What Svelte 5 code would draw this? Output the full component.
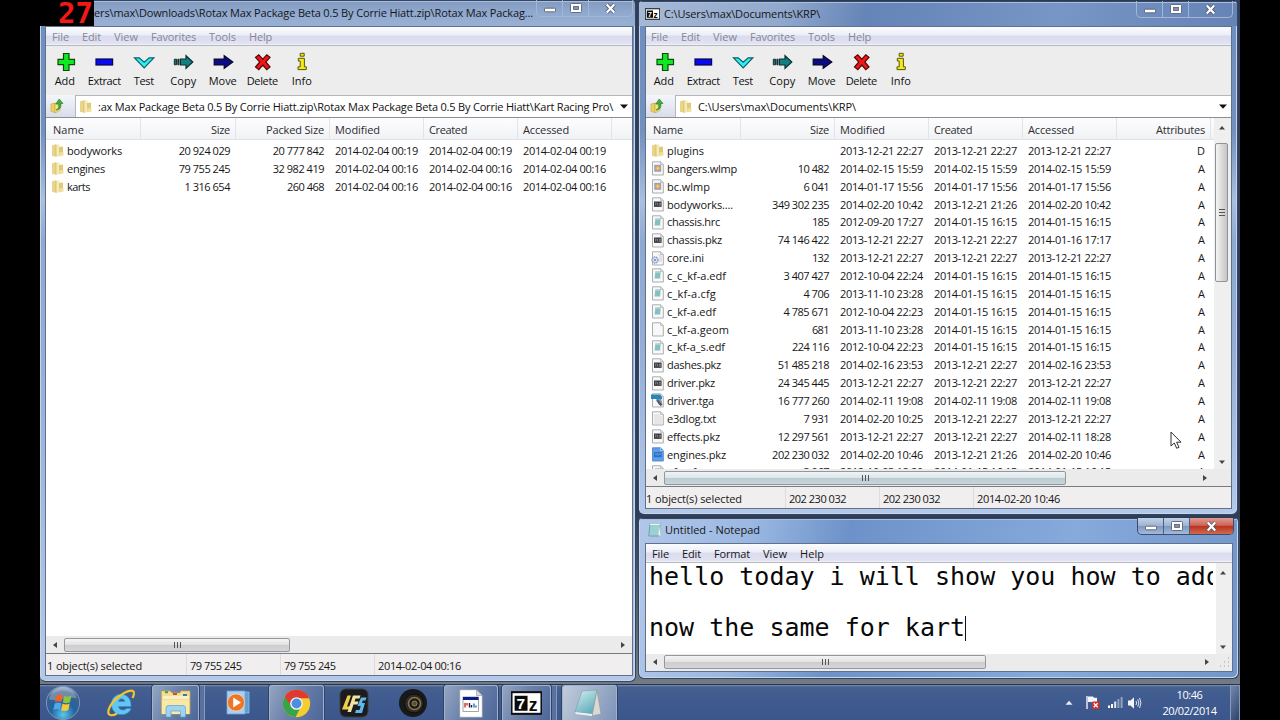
<script>
  // Spreads or tightens the letters so that a label takes exactly `w` pixels.
  function fit(node, w) {
    const apply = (width) => {
      if (!width) return;
      node.style.letterSpacing = '0px';
      const natural = node.getBoundingClientRect().width;
      const spacing = (width - natural) / node.textContent.length;
      node.style.letterSpacing = spacing.toFixed(3) + 'px';
    };
    apply(w);
    return { update: apply };
  }

  const menu = [['File', 17, 13], ['Edit', 19, 13], ['View', 24, 13], ['Favorites', 45, 13], ['Tools', 27, 13], ['Help', 23, 0]];
  const noteMenu = [['File', 17, 13], ['Edit', 19, 13], ['Format', 36, 13], ['View', 24, 13], ['Help', 24, 0]];
  const tools = [['Add', 20], ['Extract', 33], ['Test', 20], ['Copy', 26], ['Move', 28], ['Delete', 31], ['Info', 20]];

  const leftCols = [['Name', 31], ['Size', 19], ['Packed Size', 58], ['Modified', 45], ['Created', 38], ['Accessed', 46]];
  const rightCols = [['Name', 30], ['Size', 19], ['Modified', 45], ['Created', 38], ['Accessed', 46], ['Attributes', 49]];

  const leftRows = [
    ['folder', 'bodyworks', 55, '20 924 029', '20 777 842', '2014-02-04 00:19', '2014-02-04 00:19', '2014-02-04 00:19'],
    ['folder', 'engines', 38, '79 755 245', '32 982 419', '2014-02-04 00:16', '2014-02-04 00:16', '2014-02-04 00:16'],
    ['folder', 'karts', 23, '1 316 654', '260 468', '2014-02-04 00:16', '2014-02-04 00:16', '2014-02-04 00:16']
  ];
  const rightRows = [
    ['folder', 'plugins', 37, '', '2013-12-21 22:27', '2013-12-21 22:27', '2013-12-21 22:27', 'D'],
    ['wlmp', 'bangers.wlmp', 70, '10 482', '2014-02-15 15:59', '2014-02-15 15:59', '2014-02-15 15:59', 'A'],
    ['wlmp', 'bc.wlmp', 43, '6 041', '2014-01-17 15:56', '2014-01-17 15:56', '2014-01-17 15:56', 'A'],
    ['pkz', 'bodyworks....', 66, '349 302 235', '2014-02-20 10:42', '2013-12-21 21:26', '2014-02-20 10:42', 'A'],
    ['note', 'chassis.hrc', 53, '185', '2012-09-20 17:27', '2014-01-15 16:15', '2014-01-15 16:15', 'A'],
    ['pkz', 'chassis.pkz', 55, '74 146 422', '2013-12-21 22:27', '2013-12-21 22:27', '2014-01-16 17:17', 'A'],
    ['ini', 'core.ini', 37, '132', '2013-12-21 22:27', '2013-12-21 22:27', '2013-12-21 22:27', 'A'],
    ['note', 'c_c_kf-a.edf', 59, '3 407 427', '2012-10-04 22:24', '2014-01-15 16:15', '2014-01-15 16:15', 'A'],
    ['note', 'c_kf-a.cfg', 49, '4 706', '2013-11-10 23:28', '2014-01-15 16:15', '2014-01-15 16:15', 'A'],
    ['note', 'c_kf-a.edf', 49, '4 785 671', '2012-10-04 22:23', '2014-01-15 16:15', '2014-01-15 16:15', 'A'],
    ['blank', 'c_kf-a.geom', 62, '681', '2013-11-10 23:28', '2014-01-15 16:15', '2014-01-15 16:15', 'A'],
    ['note', 'c_kf-a_s.edf', 58, '224 116', '2012-10-04 22:23', '2014-01-15 16:15', '2014-01-15 16:15', 'A'],
    ['pkz', 'dashes.pkz', 54, '51 485 218', '2014-02-16 23:53', '2013-12-21 22:27', '2014-02-16 23:53', 'A'],
    ['pkz', 'driver.pkz', 48, '24 345 445', '2013-12-21 22:27', '2013-12-21 22:27', '2013-12-21 22:27', 'A'],
    ['tga', 'driver.tga', 47, '16 777 260', '2014-02-11 19:08', '2014-02-11 19:08', '2014-02-11 19:08', 'A'],
    ['txt', 'e3dlog.txt', 49, '7 931', '2014-02-20 10:25', '2013-12-21 22:27', '2013-12-21 22:27', 'A'],
    ['pkz', 'effects.pkz', 53, '12 297 561', '2013-12-21 22:27', '2013-12-21 22:27', '2014-02-11 18:28', 'A'],
    ['sel', 'engines.pkz', 59, '202 230 032', '2014-02-20 10:46', '2013-12-21 21:26', '2014-02-20 10:46', 'A'],
    ['note', 'gfx.cfg', 36, '3 067', '2012-10-03 18:20', '2014-01-15 16:15', '2014-01-15 16:15', 'A']
  ];

  // Width of a number or date in the list, from the number of its digits and gaps.
  const numWidth = (s) => {
    if (!s) return 0;
    if (s.includes('-')) return 83;
    const gaps = s.split(' ').length - 1;
    return (s.length - gaps) * 5.7 + gaps * 2.8;
  };
</script>

{#snippet fileIcon(kind)}
  <svg class="ficon" width="14" height="15" viewBox="0 0 14 15">
    {#if kind === 'folder'}
      <path d="M1 2.2 5 1.2V13.5L1 13z" fill="#e9d487" />
      <path d="M5 1.4 8.5 1.8V13L5 14z" fill="#f6eab4" />
      <path d="M8 4 12 3.4V11.5L8 13z" fill="#e0ca76" />
      <path d="M5 1.4V14" stroke="#d0b967" stroke-width=".7" />
      <path d="M8.3 9.5 12.5 9V12.5L8.3 13.6z" fill="#efe0a0" />
    {:else}
      <path d="M1.5 .8H9.5L12.3 3.5V14H1.5z" fill={kind === 'sel' ? '#5d9fe8' : '#f8f8f8'} stroke={kind === 'sel' ? '#4c88cc' : '#a2a4a8'} stroke-width=".9" />
      <path d="M9.5 .8V3.5H12.3" fill="none" stroke={kind === 'sel' ? '#a8cdf5' : '#b6b8bb'} stroke-width=".8" />
      {#if kind === 'wlmp'}
        <rect x="3.2" y="3.8" width="7" height="7" fill="#98a4b8" />
        <circle cx="6.7" cy="7.3" r="2.4" fill="#e8a758" />
        <circle cx="6.7" cy="7.3" r="1" fill="#fbdc9c" />
      {:else if kind === 'note'}
        <path d="M4.4 3.4H9.6L9.2 10.4H3.6z" fill="#86bfc0" />
        <path d="M4.4 3.4H9.6V5H4.2z" fill="#a9d3d6" />
      {:else if kind === 'pkz'}
        <rect x="3" y="4.5" width="7.6" height="5.4" fill="#3c3c40" />
        <path d="M4 6.2H5.5M4 7.8H5M6.4 6V8.4M8 6.4H9.6L8.4 8.4H9.7" stroke="#aaaab0" stroke-width=".7" fill="none" />
      {:else if kind === 'sel'}
        <rect x="3" y="5" width="7.6" height="5.2" fill="#2f6fc0" />
        <path d="M4 7H6M7 6.2V8.6M8.2 7H9.8" stroke="#8fbef2" stroke-width=".8" />
      {:else if kind === 'ini'}
        <path d="M7 4H11M8 6H11M8 8H11M8 10H11" stroke="#c6cbe0" />
        <circle cx="4" cy="9" r="3" fill="#d8def2" stroke="#8794bd" stroke-width="1.4" stroke-dasharray="1.4 .7" />
        <circle cx="4" cy="9" r="1" fill="#7485b5" />
      {:else if kind === 'txt'}
        <path d="M3 4H9M3 6H11M3 8H11M3 10H11M3 12H11" stroke="#ccc" stroke-width=".8" />
      {:else if kind === 'tga'}
        <path d="M4.5 5H10L11.5 12H8z" fill="#8796a3" />
        <path d="M0 1.5H9L11 4V6H0z" fill="#2786b8" />
        <path d="M6 7 10.5 12.5" stroke="#4e5c68" stroke-width="2" />
      {/if}
    {/if}
  </svg>
{/snippet}

{#snippet toolIcon(name)}
  <svg width="22" height="20" viewBox="0 0 22 20" stroke="#111" stroke-width="1.2" stroke-linejoin="miter">
    {#if name === 'Add'}
      <path d="M9.5 1.5H15V7.3H20.5V12.7H15V18.5H9.5V12.7H4V7.3H9.5z" fill="#10e822" stroke="#064d0b" />
    {:else if name === 'Extract'}
      <rect x="3" y="7" width="16.6" height="6" fill="#0a0af0" stroke="#06064c" />
    {:else if name === 'Test'}
      <path d="M1.5 5.8H6.2L11.2 10.2 16.2 5.8H20.8L11.2 16z" fill="#2cf0f4" stroke="#135d66" />
    {:else if name === 'Copy'}
      <path d="M2.3 7.2H4.5V12.8H2.3zM5.8 7.2H7V12.8H5.8z" fill="#0a7272" stroke-width=".8" />
      <path d="M8.4 7H14V3.7L20.8 10 14 16.3V13H8.4z" fill="#128080" stroke="#0b3034" />
    {:else if name === 'Move'}
      <path d="M2.2 7H12.2V3.7L20.8 10 12.2 16.3V13H2.2z" fill="#0c0c82" stroke="#06062c" />
    {:else if name === 'Delete'}
      <path d="M7.8 2.8 11.8 7.2 15.8 2.8 19 5.4 14.8 10 19 15 15.8 17.6 11.8 13 7.8 17.6 4.5 15 8.8 10 4.5 5.4z" fill="#ee1616" stroke="#560808" />
    {:else}
      <path d="M9.2 1.3H13.2V4.2H9.2zM7.3 6.3H13.4V14.8H15.3V17.6H7V14.8H9.2V9H7.3z" fill="#f2ea18" stroke="#5a5608" stroke-width="1" />
    {/if}
  </svg>
{/snippet}

{#snippet caption(active)}
  <div class="caption" class:active>
    <span class="cbtn"><svg width="14" height="9"><rect x="1.5" y="4.2" width="11" height="3.6" rx=".8" fill="#fff" stroke="#5a6376" stroke-width=".9" /></svg></span>
    <span class="cbtn"><svg width="14" height="12"><rect x="1.5" y="1.5" width="11" height="9" rx="1" fill="#fff" stroke="#5a6376" stroke-width=".9" /><rect x="4.6" y="4.4" width="4.8" height="3" fill="#8496b4" stroke="#5a6376" stroke-width=".9" /></svg></span>
    <span class="cbtn close"><svg width="13" height="11"><path d="M2.8 1.5 10.2 9.5M10.2 1.5 2.8 9.5" stroke="#4f5566" stroke-width="4" /><path d="M2.8 1.5 10.2 9.5M10.2 1.5 2.8 9.5" stroke="#fff" stroke-width="2.3" /></svg></span>
  </div>
{/snippet}

{#snippet menubar(items, dim)}
  <div class="menubar" class:dim>
    {#each items as [label, w, gap]}
      <span class="mi" style:width="{w + gap}px"><span class="t" use:fit={w}>{label}</span></span>
    {/each}
  </div>
{/snippet}

{#snippet toolbar()}
  <div class="toolbar">
    {#each tools as [name, w]}
      <div class="tool">{@render toolIcon(name)}<span class="t" use:fit={w}>{name}</span></div>
    {/each}
  </div>
{/snippet}

{#snippet address(path, w, cls)}
  <div class="address">
    <div class="up">
      <svg width="14" height="16" viewBox="0 0 14 16">
        <path d="M1 6 5 5V14.5L1 13.5z" fill="#ecd35f" stroke="#c2a640" stroke-width=".6" />
        <path d="M5 5.5 10 6.5V12.5L5 15z" fill="#f3e48b" stroke="#c2a640" stroke-width=".6" />
        <path d="M6 12C9 11 9 8 8.5 6H5.7L9.2 1 13 5.5H10.8C11.4 9 10 12 6 12z" fill="#3fae3a" stroke="#237222" stroke-width=".6" />
      </svg>
    </div>
    <div class="path {cls}">
      {@render fileIcon('folder')}
      <span class="t" use:fit={w}>{path}</span>
      <svg class="drop" width="8" height="5"><path d="M0 .5H8L4 4.8z" fill="#111" /></svg>
    </div>
  </div>
{/snippet}

{#snippet arrow(dir)}
  <svg class="arrow" width="8" height="8" viewBox="0 0 8 8">
    <path d={{ left: 'M6 1V7L2 4z', right: 'M2 1V7L6 4z', up: 'M1 5.5H7L4 2z', down: 'M1 2.5H7L4 6z' }[dir]} fill="#444" />
  </svg>
{/snippet}

{#snippet hscroll(w, cls)}
  <div class="hscroll {cls}">
    <span class="ha">{@render arrow('left')}</span>
    <div class="thumb" style:width="{w}px"><i></i><i></i><i></i></div>
    <span class="ha end">{@render arrow('right')}</span>
  </div>
{/snippet}

{#snippet status(cells)}
  <div class="status">
    {#each cells as [text, w]}
      <div class="cell"><span class="t" use:fit={w}>{text}</span></div>
    {/each}
  </div>
{/snippet}

{#snippet logo7z(w, h)}
  <svg width={w} height={h} viewBox="0 0 30 22">
    <rect x=".5" y=".5" width="29" height="21" fill="#fff" stroke="#111" stroke-width="2" />
    <rect x="3.5" y="4" width="12.5" height="14.5" fill="#0a0a0a" />
    <text x="5.3" y="16.5" font-family="Liberation Sans" font-weight="700" font-size="15" fill="#fff">7</text>
    <text x="17.2" y="18.6" font-family="Liberation Sans" font-weight="700" font-size="17" fill="#0a0a0a">z</text>
  </svg>
{/snippet}

<div class="screen">
  <div class="desktop">
    <div class="windows">
      <section class="win archive-left">
        <header class="title">
          <div class="counter">27</div>
          <span class="t name" use:fit={439}>ers\max\Downloads\Rotax Max Package Beta 0.5 By Corrie Hiatt.zip\Rotax Max Packag...</span>
          {@render caption(false)}
        </header>
        <div class="client">
          {@render menubar(menu, true)}
          {@render toolbar()}
          {@render address(':ax Max Package Beta 0.5 By Corrie Hiatt.zip\\Rotax Max Package Beta 0.5 By Corrie Hiatt\\Kart Racing Pro\\', 515, 'deep')}
          <div class="list">
            <div class="row head">
              {#each leftCols as [label, w], i}
                <div class="c" class:r={i === 1 || i === 2}><span class="t" use:fit={w}>{label}</span></div>
              {/each}
            </div>
            {#each leftRows as [kind, name, w, ...cells]}
              <div class="row">
                <div class="c file">{@render fileIcon(kind)}<span class="t" use:fit={w}>{name}</span></div>
                {#each cells as v, i}
                  <div class="c" class:r={i < 2}><span class="t" use:fit={numWidth(v)}>{v}</span></div>
                {/each}
              </div>
            {/each}
          </div>
          {@render hscroll(226, 'l')}
          {@render status([['1 object(s) selected', 95], ['79 755 245', 51.5], ['79 755 245', 51.5], ['2014-02-04 00:16', 83]])}
        </div>
      </section>

      <div class="column">
        <section class="win archive-right">
          <header class="title">
            {@render logo7z(15, 12)}
            <span class="t name" use:fit={156}>C:\Users\max\Documents\KRP\</span>
            {@render caption(false)}
          </header>
          <div class="client">
            {@render menubar(menu, true)}
            {@render toolbar()}
            {@render address('C:\\Users\\max\\Documents\\KRP\\', 158, '')}
            <div class="listwrap">
              <div class="list">
                <div class="row head">
                  {#each rightCols as [label, w], i}
                    <div class="c" class:r={i === 1 || i === 5}><span class="t" use:fit={w}>{label}</span></div>
                  {/each}
                </div>
                {#each rightRows as [kind, name, w, ...cells]}
                  <div class="row">
                    <div class="c file">{@render fileIcon(kind)}<span class="t" use:fit={w}>{name}</span></div>
                    {#each cells as v, i}
                      <div class="c" class:r={i === 0 || i === 4}><span class="t" use:fit={i === 4 ? 0 : numWidth(v)}>{v}</span></div>
                    {/each}
                  </div>
                {/each}
              </div>
              <div class="vscroll">
                {@render arrow('up')}
                <div class="vthumb"><i></i><i></i><i></i></div>
                {@render arrow('down')}
              </div>
            </div>
            {@render hscroll(402, 'cool')}
            {@render status([['1 object(s) selected', 96], ['202 230 032', 57], ['202 230 032', 57], ['2014-02-20 10:46', 83]])}
          </div>
        </section>

        <section class="win notepad">
          <header class="title">
            <svg width="13" height="15" viewBox="0 0 13 15"><path d="M2 1.5H12L11 14H.8z" fill="#9ad2d4" stroke="#5f8f98" stroke-width=".7" /><path d="M2 1.5H12V3H2z" fill="#e6f4f4" /><path d="M11.2 3 12.4 13.5H10.4z" fill="#f4f4ea" /></svg>
            <span class="t name" use:fit={95}>Untitled - Notepad</span>
            {@render caption(true)}
          </header>
          <div class="client">
            {@render menubar(noteMenu, false)}
            <div class="editor">
              <div class="lines">
                <div>hello today i will show you how to add</div>
                <div>&nbsp;</div>
                <div>now the same for kart<span class="caret"></span></div>
              </div>
              <div class="vscroll plain">{@render arrow('up')}{@render arrow('down')}</div>
            </div>
            <div class="nbottom">
              {@render hscroll(322, 'n')}
              <svg class="grip" width="16" height="15"><path d="M12 4h1M12 8h1M12 12h1M8 8h1M8 12h1M4 12h1" stroke="#bbb" stroke-width="1.6" /></svg>
            </div>
          </div>
        </section>
      </div>
    </div>

    <footer class="taskbar">
      <div class="slot orb">
        <svg width="36" height="36" viewBox="0 0 36 36">
          <defs>
            <radialGradient id="orb" cx=".5" cy=".85" r=".9"><stop offset="0" stop-color="#58c8ee" /><stop offset=".4" stop-color="#2464a0" /><stop offset=".75" stop-color="#3d5f8c" /><stop offset="1" stop-color="#b9cbe0" /></radialGradient>
          </defs>
          <circle cx="18" cy="18" r="16.6" fill="url(#orb)" stroke="#7a98bb" stroke-width="1" />
          <path d="M4 14C6 5 14 2 18 2S30 5 32 14C26 10 10 18 4 14z" fill="#fff" opacity=".28" />
          <path d="M11.5 10.5C14 9 16 9.3 18 10.4L16.6 17C14.6 16 12.5 16 10 17.2z" fill="#f0622a" />
          <path d="M19.2 11C21.5 12 24 12 26.5 10.6L25 17.3C22.6 18.5 20 18.5 17.8 17.5z" fill="#8cc63c" />
          <path d="M9.7 18.4C12 17.2 14.4 17.2 16.3 18.2L15 24.7C13 23.8 10.8 23.8 8.3 25z" fill="#4fa8ec" />
          <path d="M17.5 18.8C20 19.8 22.3 19.7 24.7 18.6L23.3 25C21 26.2 18.2 26.2 16.1 25.2z" fill="#fcc736" />
        </svg>
      </div>
      <div class="slot ie">
        <svg width="32" height="30" viewBox="0 0 32 30">
          <path d="M26 18.5H13.5C14 22.5 19.5 23 21.3 20.5H26C23 29.5 6.5 29 6.5 16 6.5 3 27 2.5 26 18.5zM13.6 13.5H19.8C19.4 9.8 14.2 9.8 13.6 13.5z" fill="#62c6f4" stroke="#2f94ce" stroke-width=".6" />
          <path d="M27.5 10C31 3 28 .5 20 4.5 11 9 4 17.5 3.3 23.5 2.8 28 7.5 28.2 12 25.5" fill="none" stroke="#f2c52c" stroke-width="2.2" />
        </svg>
      </div>
      <div class="slot app explorer">
        <svg width="32" height="30" viewBox="0 0 32 30">
          <path d="M1.5 6V3H10L12 5H20L21 3H30V26H1.5z" fill="#f2de8d" stroke="#c8aa55" stroke-width=".7" />
          <path d="M3 8H29V11H3z" fill="#fff" opacity=".55" />
          <path d="M5 4.2h3" stroke="#3da53c" stroke-width="2" /><path d="M13 6h4" stroke="#c9542c" stroke-width="2" /><path d="M23 7h4" stroke="#3973c2" stroke-width="2" />
          <path d="M2 12H29V26H2z" fill="#f8eaa6" />
          <path d="M6 29V20Q6 17.5 8.5 17.5H23Q25.5 17.5 25.5 20V29H20.5V23H11V29z" fill="#9fd3f0" stroke="#5aa2d2" stroke-width=".7" />
        </svg>
      </div>
      <div class="stack"></div>
      <div class="slot wmp">
        <svg width="26" height="25" viewBox="0 0 26 25">
          <path d="M7 2H25V23H7z" fill="#5f9fd2" stroke="#8fc0e6" stroke-width=".8" /><path d="M3 1H21V24H3z" fill="#a9cfee" stroke="#6ea5d4" stroke-width=".8" />
          <circle cx="12" cy="12.5" r="8.6" fill="#ee7426" stroke="#fbd3b0" stroke-width=".8" /><path d="M9.2 7.5 17 12.5 9.2 17.5z" fill="#fff" />
        </svg>
      </div>
      <div class="slot app chrome">
        <svg width="29" height="29" viewBox="0 0 28 28">
          <circle cx="14" cy="14" r="13.2" fill="#f6cd2e" />
          <path d="M14 14 2.6 7.4A13.2 13.2 0 0 1 26.3 9H14z" fill="#df3a30" />
          <path d="M2.6 7.4A13.2 13.2 0 0 0 13 27.2L18.3 17 9.5 16z" fill="#37a449" />
          <path d="M2.6 7.4 9 17 14 9z" fill="#df3a30" /><path d="M2.6 7.4 9.6 17.8 5 17z" fill="#37a449" />
          <circle cx="14" cy="14" r="6.1" fill="#f5f5f5" /><circle cx="14" cy="14" r="4.8" fill="#4a8fe0" />
        </svg>
      </div>
      <div class="slot lfs">
        <svg width="30" height="30" viewBox="0 0 30 30">
          <rect x=".8" y=".8" width="28.4" height="28.4" rx="6" fill="#1b1c20" stroke="#4a4d55" />
          <path d="M8.5 7.5H12L8 18.5H12.5L11.5 21.5H3z" fill="#f2cf46" />
          <path d="M14 7.5H21.5L20.5 10.5H16.5L15.5 13.5H19.5L18.5 16.5H14.5L12 24H8.5z" fill="#f1e4a0" />
          <path d="M22 9.5H27.5L26.5 12.5H23.8L23 15H26L23 25H16L17 22H20.5L21.7 18H18.5z" fill="#5fb8ea" />
        </svg>
      </div>
      <div class="slot tyre">
        <svg width="30" height="30" viewBox="0 0 30 30">
          <circle cx="15" cy="15" r="14" fill="#191919" /><circle cx="16" cy="15.5" r="9.5" fill="#2c2b29" stroke="#0d0d0d" />
          <circle cx="16.5" cy="15.5" r="6" fill="#1c1915" stroke="#8c7648" stroke-width="1.6" /><circle cx="16.5" cy="15.5" r="2.5" fill="#574b34" stroke="#a8976c" stroke-width=".8" />
        </svg>
      </div>
      <div class="slot app doc">
        <svg width="24" height="29" viewBox="0 0 24 29">
          <path d="M.7.7H17.5L23.3 6.5V28.3H.7z" fill="#fff" stroke="#8e939c" stroke-width=".8" /><path d="M17.5.7V6.5H23.3z" fill="#d5d8dd" stroke="#8e939c" stroke-width=".6" />
          <rect x="4" y="8" width="15.5" height="14.5" fill="#fff" stroke="#8e8e96" stroke-width=".8" /><rect x="4" y="8" width="15.5" height="3" fill="#0b1d8a" />
          <path d="M6 14v4.5M8 14v2.5" stroke="#cc2d2d" stroke-width="1.4" /><path d="M10.5 14v4.5M12.5 16v2.5" stroke="#222" stroke-width="1.4" /><path d="M15 14.5v4M17 16.5v2" stroke="#2b6cc4" stroke-width="1.4" />
        </svg>
      </div>
      <div class="slot app seven">{@render logo7z(31, 24)}</div>
      <div class="stack"></div>
      <div class="slot app active notes">
        <svg width="30" height="30" viewBox="0 0 30 30">
          <defs><linearGradient id="np" x2=".6" y2="1"><stop offset="0" stop-color="#d5f0f1" /><stop offset="1" stop-color="#63aebb" /></linearGradient></defs>
          <path d="M9 3 24 2 19 26 2 24z" fill="url(#np)" stroke="#7aa6b0" stroke-width=".7" /><path d="M24 2 28 26 19 28z" fill="#d8d9d4" stroke="#8c9494" stroke-width=".6" /><path d="M2 24 19 26V28L3 26z" fill="#eef4f4" />
        </svg>
      </div>
      <div class="tray">
        <svg class="tup" width="8" height="5"><path d="M.5 4.8H7.5L4 .8z" fill="#e6ecf6" /></svg>
        <svg width="16" height="15" viewBox="0 0 16 15"><path d="M2 1V14" stroke="#f0f2f6" stroke-width="1.4" /><path d="M3 1.5H8L9 2.8H12V8H8L7 7H3z" fill="#f4f6fa" /><rect x="7" y="6.5" width="7.5" height="7.5" rx="1" fill="#d52f2b" /><path d="M8.8 8.3 12.7 12.2M12.7 8.3 8.8 12.2" stroke="#fff" stroke-width="1.3" /></svg>
        <svg width="17" height="13" viewBox="0 0 17 13"><path d="M2 9.5V12M5 8V12" stroke="#fff" stroke-width="2" /><path d="M8.2 5.5V12" stroke="#e4eaf2" stroke-width="2" /><path d="M11.4 3V12M14.6 1V12" stroke="#95a4bd" stroke-width="2" /></svg>
        <svg width="15" height="14" viewBox="0 0 15 14"><path d="M1 4.5H3.5L7 1.2V12.8L3.5 9.5H1z" fill="#f2f4f8" /><path d="M9 5Q10.2 7 9 9M10.8 3.4Q12.8 7 10.8 10.6M12.6 2Q15.2 7 12.6 12" fill="none" stroke="#dfe6f0" stroke-width="1" /></svg>
      </div>
      <div class="clock"><span class="t" use:fit={26}>10:46</span><span class="t" use:fit={54}>20/02/2014</span></div>
      <div class="peek"></div>
    </footer>
  </div>
  <svg class="cursor" width="12" height="19" viewBox="0 0 12 19"><path d="M1 1V15L4.3 12 6.7 17.3 9 16.3 6.6 11.2H11z" fill="#fff" stroke="#333" stroke-width="1" /></svg>
</div>

<style>
  :global(body) { margin: 0; background: #000; }
  .screen {
    position: relative; width: 1280px; height: 720px; overflow: hidden; background: #000;
    display: flex; justify-content: center;
    font: 11px/16px 'Open Sans', 'Noto Sans', sans-serif; color: #161616;
  }
  .desktop { width: 1200px; height: 720px; display: flex; flex-direction: column; background: #3e4c66; }
  .windows { display: flex; height: 684px; gap: 2px; background: linear-gradient(#2e3d59 0, #2e3d59 75%, #727a82); }
  .t { display: inline-block; white-space: pre; }
  .win {
    box-sizing: border-box; display: flex; flex-direction: column; border-radius: 5px 5px 6px 6px; overflow: hidden;
    background: linear-gradient(180deg, #6f8fc2 0, #7391be 130px, #aabfe0 200px, #8ea9d2 240px, #93add6 340px, #b4c9ea 100%);
    border: 1px solid #35445f; border-top-color: #2b3a55; box-shadow: inset 1px 0 #c5d5ec, inset -1px -1px #c5d5ec;
  }
  .archive-left { width: 596px; height: 682px; padding: 0 3px 5px 5px; border-width: 0 1px 1px 0; border-top-left-radius: 0; }
  .column { display: flex; flex-direction: column; gap: 2px; width: 601px; }
  .archive-right { width: 600px; height: 515px; padding: 0 6px 5px; }
  .notepad { width: 601px; height: 162px; padding: 0 6px 6px; background: linear-gradient(100deg, #b1c7e8 0, #9bb8e2 18%, #6c92c9 34%, #86aadc 70%, #7295ca); }
  .title {
    height: 26px; flex: none; display: flex; align-items: center; margin: 0 -6px; padding-left: 6px;
    background: linear-gradient(100deg, #a6b9d6 0, #91a9cd 24%, #6584b7 38%, #7796c5 70%, #6583b5);
    box-shadow: inset 0 1px #354765, inset 0 2px #a9bfde;
  }
  .archive-left .title { margin: 0 -3px 0 -5px; padding: 0; background: linear-gradient(#8299bd, #90a9cf 50%, #99b0d4); }
  .archive-right .title .name { margin-left: 4px; }
  .archive-right .title { height: 25px; }
  .notepad .title { height: 25px; background: none; padding-left: 9px; }
  .notepad .title .t, .notepad .title > svg { margin-top: -2px; }
  .notepad .title .name { margin-left: 4px; }
  .counter {
    flex: none; width: 54px; height: 26px; box-sizing: border-box; padding-left: 18px; background: #000; color: #f01818;
    font: 700 29px/26px 'DejaVu Sans Mono', monospace;
  }
  .caption { display: flex; align-self: flex-start; height: 17px; margin-left: auto; margin-right: 2px; border: 1px solid #a3b7d5; border-top: 0; border-radius: 0 0 5px 5px; box-sizing: border-box; }
  .archive-right .caption { margin-right: 4px; }
  .notepad .caption { margin-right: 4px; }
  .cbtn { display: flex; align-items: center; justify-content: center; width: 25px; border-right: 1px solid #a3b7d5; }
  .cbtn.close { width: 43px; border-right: 0; }
  .caption.active { border-color: #3e4d6a; background: linear-gradient(#c2d2e8, #9fb4d2 48%, #7f97bd 52%, #a3bade); overflow: hidden; }
  .caption.active .cbtn { border-color: #4e5f80; }
  .caption.active .close { background: linear-gradient(#dd9c94, #cf6455 46%, #b93322 52%, #d06a4c); border: 0; }
  .client { flex: 1; min-height: 0; display: flex; flex-direction: column; border: 1px solid #61718c; background: #ededed; overflow: hidden; margin-right: -1px; }
  .menubar { flex: none; height: 19px; box-sizing: border-box; display: flex; align-items: center; padding-top: 1px; border-bottom: 1px solid #b6b9c4; background: linear-gradient(#fbfcfe 0, #eceef8 45%, #dadcee 50%, #e0e1f1 90%, #f3f4fa); }
  .mi { flex: none; }
  .dim { color: #858794; }
  .archive-right .menubar { padding-left: 5px; }
  .archive-left .menubar { padding-left: 6px; }
  .notepad .menubar { padding-left: 6px; }
  .toolbar { flex: none; height: 49px; display: flex; margin-left: -2px; padding-top: 6px; box-sizing: border-box; color: #111; }
  .archive-left .toolbar { margin-left: -1px; }
  .tool { width: 39.5px; display: flex; flex-direction: column; align-items: center; gap: 1px; }
  .address { flex: none; height: 22px; display: flex; border-bottom: 1px solid #8a8d94; }
  .up { width: 29px; display: flex; align-items: center; padding-left: 4px; box-sizing: border-box; background: linear-gradient(#f4f6fb, #d9ddea); }
  .path { flex: 1; display: flex; align-items: center; background: #fff; border: 1px solid #b3b6bc; border-right: 0; border-bottom: 0; padding-left: 3px; }
  .path .t { margin-left: 5px; color: #111; }
  .drop { margin-left: auto; margin-right: 4px; }
  .ficon { flex: none; }
  .list { flex: 1; min-height: 0; background: #fff; overflow: hidden; }
  .listwrap { flex: 1; min-height: 0; display: flex; }
  .row { display: grid; grid-template-columns: 95px 94px repeat(4, 94px); height: 17.87px; align-items: center; }
  .archive-left .row { grid-template-columns: 95px 95px repeat(4, 94px); }
  .c { padding: 0 5px; white-space: nowrap; }
  .c.r { text-align: right; padding-right: 6px; }
  .head { height: 22px; margin-bottom: 2px; background: linear-gradient(#fdfdfe, #f6f7f9 60%, #f0f1f4); border-bottom: 1px solid #e0e2e8; box-sizing: border-box; color: #2c2c30; }
  .head .c, .head .c.r { border-right: 1px solid #e1e4ea; line-height: 23px; height: 21px; padding-right: 5px; box-sizing: border-box; }
  .head .c:first-child { padding-left: 7px; }
  .file { display: flex; align-items: center; gap: 2px; }
  .vscroll { width: 17px; flex: none; display: flex; flex-direction: column; align-items: center; justify-content: space-between; background: #efefef; padding: 6px 2px 3px 0; box-sizing: border-box; }
  .vthumb { width: 13px; height: 139px; margin: 11px 0 auto; flex: none; box-sizing: border-box; border: 1px solid #8f9296; border-radius: 2px; background: linear-gradient(90deg, #f4f4f4, #dcdcdc 50%, #c6c6c8); display: flex; flex-direction: column; align-items: center; justify-content: center; gap: 2px; }
  .vthumb i { width: 6px; height: 1px; background: #555; }
  .hscroll { flex: none; height: 18px; display: flex; align-items: center; background: #ebebeb; border-bottom: 1px solid #777b84; box-sizing: border-box; }
  .ha { width: 18px; display: flex; justify-content: center; }
  .ha.end { margin-left: auto; }
  .thumb { height: 14px; box-sizing: border-box; border: 1px solid #94979c; border-radius: 2px; background: linear-gradient(#f4f4f4, #e2e2e2 48%, #cdcdcf 52%, #d6d6d8); display: flex; align-items: center; justify-content: center; gap: 2px; }
  .thumb i { width: 1px; height: 6px; background: #555; }
  .cool .thumb { background: linear-gradient(#eff4f7, #dbe5ea 48%, #bccbd2 52%, #c8d5da); }
  .cool .ha.end { margin-right: 17px; }
  .status { flex: none; height: 21px; display: flex; background: #f0eeee; }
  .cell { width: 94px; box-sizing: border-box; padding: 4px 0 0 3px; border-left: 1px solid #dcdcde; }
  .cell:first-child { width: 140px; padding-left: 1px; border: 0; }
  .archive-right .cell:first-child { width: 139px; padding-left: 0; }
  .cell:last-child { flex: 1; }
  .editor { flex: 1; min-height: 0; display: flex; background: #fff; }
  .lines { flex: 1; min-width: 0; overflow: hidden; margin-right: 3px; padding: 1px 0 0 3px; font: 25px/25.3px 'DejaVu Sans Mono', monospace; color: #080808; white-space: nowrap; }
  .lines div { height: 25.3px; }
  .caret { display: inline-block; width: 1px; height: 25px; background: #111; vertical-align: -5px; }
  .vscroll.plain { width: 16px; }
  .nbottom { flex: none; display: flex; height: 17px; background: #ececec; }
  .nbottom .hscroll { flex: 1; border: 0; height: 16px; }
  .taskbar {
    height: 36px; display: flex; align-items: center; color: #fff; border-top: 1px solid #26344f; box-sizing: border-box;
    background: linear-gradient(#7d90b5 0, #46608f 2px, #3f5b90 40%, #3b568b);
  }
  .slot { height: 35px; flex: none; display: flex; align-items: center; justify-content: center; box-sizing: border-box; }
  .orb { width: 46px; }
  .ie { width: 73px; margin-right: -7px; }
  .ie svg { margin-right: 3px; }
  .app { background: linear-gradient(115deg, #93a5c3, #6b81aa 45%, #4d6799); border: 1px solid #a3b2cc; border-bottom: 0; border-radius: 3px 3px 0 0; box-shadow: 0 0 0 1px #304468; }
  .explorer { width: 47px; }
  .stack { width: 5px; height: 35px; margin-left: 1px; background: #5871a0; border: solid #8799ba; border-width: 1px 1px 0 0; box-sizing: border-box; }
  .wmp { width: 64px; }
  .chrome { width: 55px; }
  .lfs { width: 60px; }
  .tyre { width: 60px; }
  .tyre svg { margin-right: 2px; }
  .doc { width: 54px; }
  .seven { width: 49px; margin-left: 4px; }
  .notes { width: 55px; margin-left: 5px; }
  .notes svg { margin-right: 4px; }
  .active { background: linear-gradient(115deg, #c2cbda, #a0b0c9 50%, #7e93b8); }
  .tray { margin-left: auto; display: flex; align-items: center; gap: 6px; }
  .tray svg:last-child { margin-left: -3px; }
  .tup { margin-right: 6px; }
  .clock { width: 57px; margin: 0 4px 0 19px; display: flex; flex-direction: column; align-items: center; line-height: 16px; }
  .peek { width: 10px; height: 35px; margin-left: 8px; box-sizing: border-box; border: 1px solid #8698b8; border-bottom: 0; background: linear-gradient(120deg, #7187ae, #2f436b); }
  .cursor { position: absolute; left: 1170px; top: 431px; }
</style>
